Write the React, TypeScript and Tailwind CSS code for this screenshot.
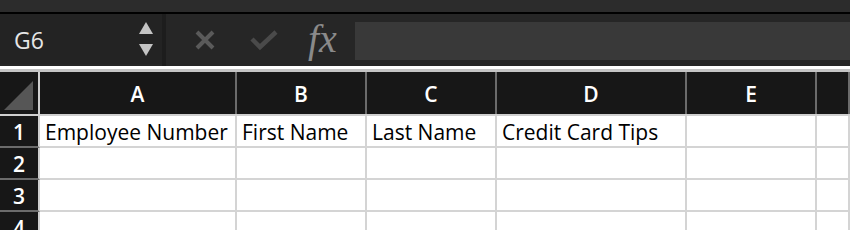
import React from 'react';

const columns = [
  { label: 'A', w: 'w-[197px]' },
  { label: 'B', w: 'w-[130px]' },
  { label: 'C', w: 'w-[130px]' },
  { label: 'D', w: 'w-[190px]' },
  { label: 'E', w: 'w-[130px]' },
  { label: '', w: 'flex-1' },
];

const rows: string[][] = [
  ['Employee Number', 'First Name', 'Last Name', 'Credit Card Tips', '', ''],
  ['', '', '', '', '', ''],
  ['', '', '', '', '', ''],
  ['', '', '', '', '', ''],
];

const App: React.FC = () => {
  return (
    <div
      className="w-[850px] h-[230px] overflow-hidden bg-white"
      style={{ fontFamily: '"Open Sans", "Liberation Sans", sans-serif' }}
    >
      {/* window strip */}
      <div className="h-[12px] bg-[#2c2c2c]" />
      <div className="h-[2px] bg-black" />

      {/* formula toolbar */}
      <div className="flex h-[52px] bg-[#262626]">
        <div className="flex w-[162px] h-[50px] items-center justify-between bg-[#232323] pl-[14px] pr-[8px]">
          <span className="text-[23px] text-[#e6e6e6] leading-none pt-[2px]">G6</span>
          <div className="flex flex-col gap-[10px] pr-[1px]">
            <svg width="14" height="12" viewBox="0 0 14 12">
              <polygon points="7,0 14,12 0,12" fill="#c4c4c4" />
            </svg>
            <svg width="14" height="12" viewBox="0 0 14 12">
              <polygon points="0,0 14,0 7,12" fill="#c4c4c4" />
            </svg>
          </div>
        </div>
        <div className="w-[4px] h-[52px] bg-[#1d1d1d]" />
        <div className="flex items-center pl-[29px] gap-[35px]">
          <svg width="20" height="20" viewBox="0 0 20 20">
            <path d="M2 2 L18 18 M18 2 L2 18" stroke="#5a5a5a" strokeWidth="4" />
          </svg>
          <svg width="28" height="22" viewBox="0 0 28 22">
            <path d="M2 10 L10 18 L26 3" stroke="#4a4a4a" strokeWidth="4.5" fill="none" />
          </svg>
        </div>
        <span
          className="ml-[30px] text-[40px] italic text-[#8a8a8a] leading-none self-center pb-[2px]"
          style={{ fontFamily: '"Liberation Serif", "DejaVu Serif", serif' }}
        >
          fx
        </span>
        <div className="ml-[18px] mt-[8px] h-[38px] flex-1 bg-[#393939]" />
      </div>

      {/* separator */}
      <div className="h-[3px] bg-white" />
      <div className="h-[3px] bg-[#c4c4c4]" />

      {/* grid */}
      <div className="flex flex-col">
        <div className="flex h-[44px] bg-[#171717] border-b-2 border-[#cfcfcf]">
          <div className="w-[40px] shrink-0 border-r-2 border-[#cfcfcf] relative">
            <svg width="38" height="42" viewBox="0 0 38 42" className="absolute inset-0">
              <polygon points="4,38 33,9 33,38" fill="#565656" />
            </svg>
          </div>
          {columns.map((c, i) => (
            <div
              key={i}
              className={`${c.w} shrink-0 border-r-2 border-[#6b6b6b] flex items-center justify-center pt-[4px] text-white text-[21px] font-semibold`}
            >
              {c.label}
            </div>
          ))}
        </div>
        {rows.map((r, ri) => (
          <div key={ri} className="flex h-[32px]">
            <div className="w-[40px] shrink-0 bg-[#171717] border-r-2 border-r-[#cfcfcf] border-b-2 border-b-[#6b6b6b] flex items-center justify-center pt-[3px] text-white text-[21px] font-semibold">
              {ri + 1}
            </div>
            {r.map((v, ci) => (
              <div
                key={ci}
                className={`${columns[ci].w} shrink-0 border-r-2 border-b-2 border-[#d4d4d4] flex items-center pl-[5px] pt-[3px] text-black text-[21px] leading-none whitespace-nowrap overflow-hidden`}
              >
                {v}
              </div>
            ))}
          </div>
        ))}
      </div>
    </div>
  );
};

export default App;
